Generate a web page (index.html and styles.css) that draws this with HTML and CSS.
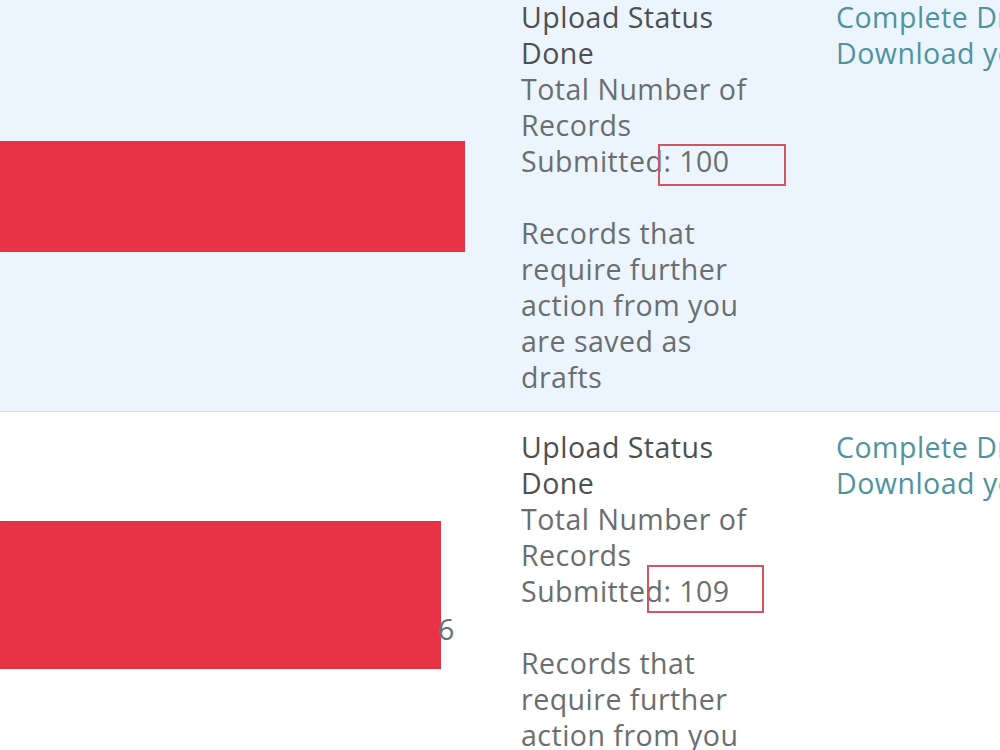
FILE: index.html
```html
<!DOCTYPE html>
<html>
<head>
<meta charset="utf-8">
<link rel="stylesheet" href="styles.css">
</head>
<body>
<div class="table">
  <div class="row row-alt">
    <div class="cell cell-file">
      <div class="redact redact-1"></div>
    </div>
    <div class="cell cell-status">
      <div class="status-title">Upload Status</div>
      <div class="status-title">Done</div>
      <p class="status-text">Total Number of<br>Records<br>Submitted: 100</p>
      <p class="status-text status-note">Records that<br>require further<br>action from you<br>are saved as<br>drafts</p>
      <span class="mark-box mark-box-1"></span>
    </div>
    <div class="cell cell-actions">
      <a class="link">Complete Drafts</a>
      <a class="link">Download your Processing Report</a>
    </div>
  </div>
  <div class="row">
    <div class="cell cell-file">
      <div class="hidden-name">6</div>
      <div class="redact redact-2"></div>
    </div>
    <div class="cell cell-status">
      <div class="status-title">Upload Status</div>
      <div class="status-title">Done</div>
      <p class="status-text">Total Number of<br>Records<br>Submitted: 109</p>
      <p class="status-text status-note">Records that<br>require further<br>action from you<br>are saved as<br>drafts</p>
      <span class="mark-box mark-box-2"></span>
    </div>
    <div class="cell cell-actions">
      <a class="link">Complete Drafts</a>
      <a class="link">Download your Processing Report</a>
    </div>
  </div>
</div>
</body>
</html>
```

FILE: styles.css
```css
html, body {
  margin: 0;
  padding: 0;
  background: #ffffff;
  overflow: hidden;
  width: 1000px;
  height: 750px;
}
body {
  font-family: "Open Sans", "Noto Sans", sans-serif;
  font-size: 28.5px;
  line-height: 36px;
  color: #6a6e70;
  letter-spacing: 0.5px;
}
.table {
  margin-top: -18px;
  width: 1300px;
}
.row {
  display: grid;
  grid-template-columns: 521px 315px 1fr;
  border-bottom: 1px solid #dfe3e6;
  background: #ffffff;
}
.row-alt {
  background: #ecf5fd;
}
.cell {
  padding: 17px 0 16px 0;
}
.cell-file {
  position: relative;
}
.redact {
  background: #e83346;
  box-shadow: 0 0 1px #b3404e inset;
}
.redact-1 {
  width: 465px;
  height: 111px;
  margin-top: 142px;
}
.redact-2 {
  width: 441px;
  height: 148px;
  margin-top: 92px;
}
.hidden-name {
  position: absolute;
  left: 438px;
  top: 199px;
  color: #6a6e70;
}
.cell-status {
  position: relative;
  white-space: nowrap;
}
.status-title {
  color: #4c5053;
  font-weight: 500;
}
.status-text {
  margin: 0;
}
.status-note {
  margin-top: 36px;
}
.mark-box {
  position: absolute;
  border: 2px solid #d25562;
}
.mark-box-1 {
  left: 137px;
  top: 162px;
  width: 124px;
  height: 38px;
}
.mark-box-2 {
  left: 126px;
  top: 153px;
  width: 113px;
  height: 44px;
}
.cell-actions {
  display: flex;
  flex-direction: column;
  white-space: nowrap;
}
.link {
  color: #4f939f;
  text-decoration: none;
}
```
